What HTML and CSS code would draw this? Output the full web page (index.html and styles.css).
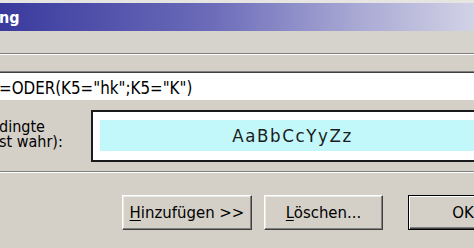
FILE: index.html
```html
<!DOCTYPE html>
<html lang="de">
<head>
<meta charset="utf-8">
<title>Bedingte Formatierung</title>
<link rel="stylesheet" href="styles.css">
</head>
<body>
<div class="window">
  <div class="frame-top"></div>
  <div class="titlebar"><span class="title">ng</span></div>
  <div class="band"></div>
  <div class="groove"></div>
  <div class="formula-row">
    <div class="formula">=ODER(K5="hk";K5="K")</div>
  </div>
  <div class="preview-row">
    <div class="preview-label">dingte<br>st wahr):</div>
    <div class="preview-box">
      <div class="preview-sample">AaBbCcYyZz</div>
    </div>
  </div>
  <div class="groove groove-lower"></div>
  <div class="buttons">
    <button class="btn btn-add"><u>H</u>inzufügen &gt;&gt;</button>
    <button class="btn btn-del"><u>L</u>öschen...</button>
    <button class="btn btn-ok">OK</button>
  </div>
</div>
</body>
</html>
```

FILE: styles.css
```css
html, body {
  margin: 0;
  padding: 0;
}
body {
  width: 474px;
  height: 248px;
  overflow: hidden;
  background: #d4d0c8;
  font-family: "DejaVu Sans Condensed", "DejaVu Sans", sans-serif;
  font-stretch: condensed;
  color: #000;
}
.window {
  width: 474px;
  height: 248px;
  overflow: hidden;
  background: #d4d0c8;
}
.frame-top {
  height: 3px;
  background: #e6e5e2;
}
.titlebar {
  height: 28px;
  background: linear-gradient(90deg, #3a3a9e 0%, #6c6cba 45%, #a8a8d4 75%, #d2d2e6 100%);
  display: flex;
  align-items: center;
}
.title {
  color: #fff;
  font-weight: bold;
  font-size: 16px;
  margin-left: -1px;
  margin-top: 1px;
}
.band {
  height: 22px;
  background: #d6d3cd;
}
.groove {
  height: 1px;
  background: #808080;
  border-bottom: 1px solid #ffffff;
}
.formula-row {
  padding-top: 16px;
}
.formula {
  height: 24px;
  background: #fff;
  border-top: 1px solid #808080;
  box-shadow: inset 0 1px 0 #404040;
  border-bottom: 1px solid #fff;
  padding-top: 3px;
  font-size: 16.8px;
  line-height: 26px;
  white-space: nowrap;
  margin-left: -1px;
  overflow: hidden;
}
.preview-row {
  display: flex;
  margin-top: 10px;
  height: 52px;
}
.preview-label {
  width: 92px;
  flex: none;
  font-size: 16px;
  line-height: 15px;
  padding-top: 8.5px;
  white-space: nowrap;
  margin-left: -1px;
}
.preview-box {
  flex: none;
  width: 400px;
  height: 52px;
  border: 2px solid #1a1a1a;
  background: #fff;
  padding: 8px 0 9px 7px;
  box-sizing: border-box;
  display: flex;
}
.preview-sample {
  width: 385px;
  height: 31px;
  flex: none;
  background: #c2f8fa;
  display: flex;
  align-items: center;
  justify-content: center;
  font-size: 18.5px;
  letter-spacing: 1.6px;
  color: #1c1c1c;
}
.groove-lower {
  margin-top: 9px;
}
.buttons {
  display: flex;
  margin-top: 22px;
  padding-left: 122px;
}
.btn {
  flex: none;
  height: 35px;
  box-sizing: border-box;
  background: #d4d0c8;
  font-family: inherit;
  font-stretch: condensed;
  font-size: 16.6px;
  color: #000;
  padding: 0;
  margin: 0;
  border: 1px solid;
  border-color: #ffffff #404040 #404040 #ffffff;
  box-shadow: inset -1px -1px 0 #808080, inset 1px 1px 0 #eceae4;
  white-space: nowrap;
}
.btn u {
  text-decoration-thickness: 1px;
  text-underline-offset: 2px;
}
.btn-add {
  width: 130px;
}
.btn-del {
  width: 119px;
  margin-left: 12px;
}
.btn-ok {
  width: 110px;
  margin-left: 25px;
  border: 1px solid #000;
  box-shadow: inset 1px 1px 0 #ffffff, inset -1px -1px 0 #404040, inset -2px -2px 0 #808080;
}
```
